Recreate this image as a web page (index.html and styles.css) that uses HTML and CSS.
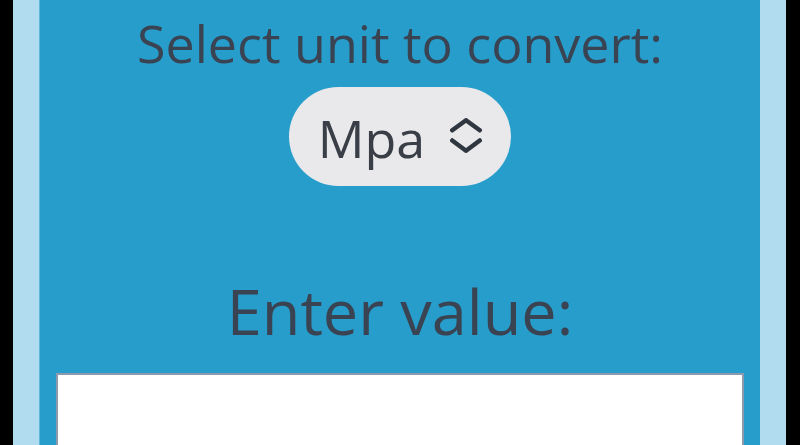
FILE: index.html
```html
<!DOCTYPE html>
<html>
<head>
<meta charset="utf-8">
<link rel="stylesheet" href="styles.css">
</head>
<body>
<div class="screen">
  <main class="panel">
    <label class="label label-unit" for="unit">Select unit to convert:</label>
    <div class="select" id="unit">
      <span class="select-value">Mpa</span>
      <svg class="chevrons" width="32" height="35" viewBox="0 0 32 35" aria-hidden="true">
        <polyline points="2.25,12.25 16,2.25 29.75,12.25" fill="none" stroke="#30363f" stroke-width="4.5" stroke-linecap="round" stroke-linejoin="round"/>
        <polyline points="2.25,22.5 16,32.75 29.75,22.5" fill="none" stroke="#30363f" stroke-width="4.5" stroke-linecap="round" stroke-linejoin="round"/>
      </svg>
    </div>
    <label class="label label-value" for="value">Enter value:</label>
    <input class="value-input" id="value" type="text">
  </main>
</div>
</body>
</html>
```
FILE: styles.css
```css
html, body {
  margin: 0;
  padding: 0;
  height: 100%;
}
body {
  background: #000;
  font-family: "Open Sans", "Noto Sans", sans-serif;
  overflow: hidden;
}
.screen {
  margin: 0 14px 0 13px;
  height: 100%;
  background: #b1dcef;
  padding: 0 26px;
}
.panel {
  height: 100%;
  overflow: hidden;
  background: #279dcb;
  border-left: 1px solid #5fb6da;
  display: flex;
  flex-direction: column;
  align-items: center;
  color: #3a4352;
}
.panel > * {
  flex-shrink: 0;
}
.label {
  display: block;
  text-align: center;
}
.label-unit {
  margin-top: 13px;
  font-size: 52px;
  line-height: 60px;
}
.select {
  margin-top: 14px;
  width: 222px;
  height: 99px;
  box-sizing: border-box;
  border-radius: 50px;
  background: #e9e9eb;
  display: flex;
  align-items: center;
  justify-content: center;
  gap: 25px;
  padding-left: 0;
  padding-top: 3px;
}
.select-value {
  font-size: 52px;
  line-height: 60px;
  color: #3a3f47;
}
.chevrons {
  display: block;
  margin-top: -5px;
}
.label-value {
  margin-top: 90px;
  font-size: 63px;
  line-height: 70px;
}
.value-input {
  margin-top: 27px;
  align-self: stretch;
  margin-left: 16px;
  margin-right: 16px;
  height: 120px;
  border: 2px solid #8d9aae;
  background: #fff;
  box-sizing: border-box;
  padding: 0;
}
```
